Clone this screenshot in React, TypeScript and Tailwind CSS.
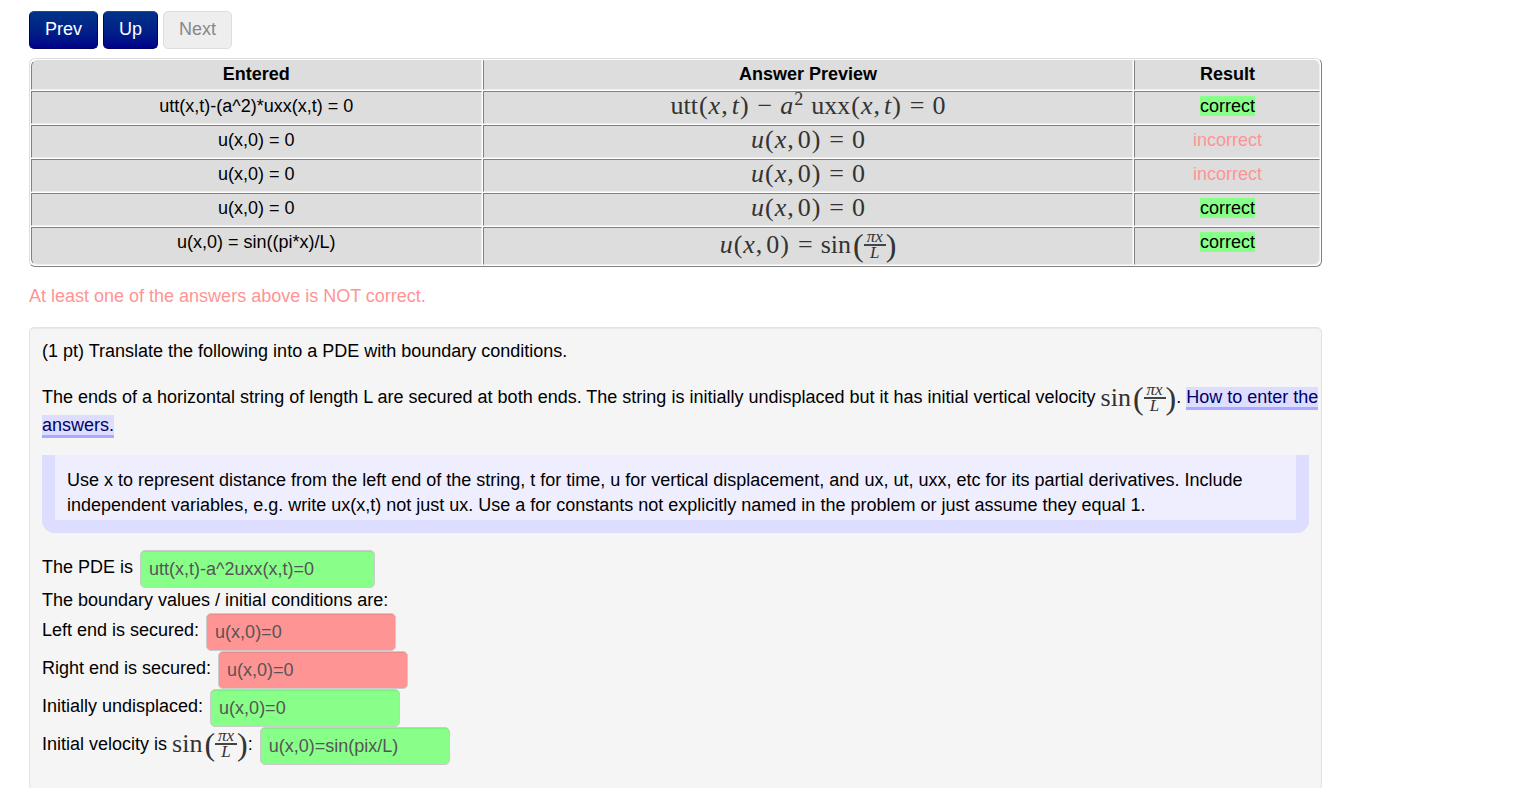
import React from "react";

type Answer = {
  entered: string;
  preview: React.ReactNode;
  correct: boolean;
};

const Var: React.FC<{ children: React.ReactNode }> = ({ children }) => <i>{children}</i>;

const SinFraction: React.FC = () => (
  <span className="inline-flex items-center align-middle font-['Liberation_Serif',serif] text-[26px] leading-6 text-[#333]">
    <span>sin</span>
    <span className="ml-0.5 text-[32px] leading-6">(</span>
    <span className="inline-flex w-[22px] flex-col items-center text-[17px] leading-[14px] italic">
      <span className="w-full border-b-2 border-[#444] text-center">πx</span>
      <span>L</span>
    </span>
    <span className="text-[32px] leading-6">)</span>
  </span>
);

const Args: React.FC<{ second: React.ReactNode }> = ({ second }) => (
  <>
    <span className="mx-px">(</span>
    <Var>x</Var>
    <span className="mr-1 ml-px">,</span>
    {second}
    <span className="mx-px">)</span>
  </>
);

const Operator: React.FC<{ children: React.ReactNode }> = ({ children }) => (
  <span className="mx-2">{children}</span>
);

const Displacement: React.FC = () => (
  <>
    <Var>u</Var>
    <Args second="0" />
    <Operator>=</Operator>
  </>
);

const answers: Answer[] = [
  {
    entered: "utt(x,t)-(a^2)*uxx(x,t) = 0",
    preview: (
      <>
        utt
        <Args second={<Var>t</Var>} />
        <Operator>−</Operator>
        <Var>a</Var>
        <sup className="mr-2 ml-px text-[18px]">2</sup>
        uxx
        <Args second={<Var>t</Var>} />
        <Operator>=</Operator>0
      </>
    ),
    correct: true
  },
  { entered: "u(x,0) = 0", preview: <><Displacement />0</>, correct: false },
  { entered: "u(x,0) = 0", preview: <><Displacement />0</>, correct: false },
  { entered: "u(x,0) = 0", preview: <><Displacement />0</>, correct: true },
  {
    entered: "u(x,0) = sin((pi*x)/L)",
    preview: (
      <span className="inline-flex items-center">
        <span><Displacement /></span>
        <SinFraction />
      </span>
    ),
    correct: true
  }
];

const cell = "border border-t-[#808080] border-l-[#808080] border-r-[#eee] border-b-[#eee] bg-[#ddd] p-0";
const headCell = "border border-t-[#ddd] border-l-[#808080] border-r-[#eee] border-b-[#eee] bg-[#ddd] px-0 pt-px pb-0.5 font-bold";

const ResultsTable: React.FC = () => (
  <table className="mt-[9px] w-full border-separate border-spacing-px rounded-md border border-t-[#ddd] border-l-[#ddd] border-r-[#808080] border-b-[#808080] text-center">
    <thead>
      <tr>
        <th className={`${headCell} w-[35%] rounded-tl-md`}>Entered</th>
        <th className={headCell}>Answer Preview</th>
        <th className={`${headCell} w-[186px] rounded-tr-md`}>Result</th>
      </tr>
    </thead>
    <tbody>
      {answers.map((answer, index) => {
        const last = index === answers.length - 1;
        return (
          <tr key={index} className={last ? "h-[38px]" : "h-[33px]"}>
            <td className={`${cell} pt-0.5 align-top ${last ? "rounded-bl-md" : ""}`}>{answer.entered}</td>
            <td className={`${cell} pt-0.5 align-top font-['Liberation_Serif',serif] text-[26px] leading-6 text-[#333]`}>
              {answer.preview}
            </td>
            <td className={`${cell} pt-0.5 align-top ${last ? "rounded-br-md" : ""}`}>
              {answer.correct ? (
                <span className="bg-[#8f8]">correct</span>
              ) : (
                <span className="text-[#ff9494]">incorrect</span>
              )}
            </td>
          </tr>
        );
      })}
    </tbody>
  </table>
);

type FieldProps = {
  id: string;
  label: React.ReactNode;
  value: string;
  correct: boolean;
  wide?: boolean;
};

const AnswerField: React.FC<FieldProps> = ({ id, label, value, correct, wide }) => {
  const [text, setText] = React.useState(value);

  return (
    <div className="flex items-center gap-[7px]">
      <label htmlFor={id} className="flex items-center pb-1">
        {label}
      </label>
      <input
        id={id}
        type="text"
        className={`h-[38px] rounded-[5px] border border-[#ccc] px-2 text-[#555] shadow-[inset_0_1px_1px_rgba(0,0,0,0.075)] ${
          correct ? "bg-[#8f8]" : "bg-[#ff9494]"
        } ${wide ? "w-[235px]" : "w-[190px]"}`}
        value={text}
        onChange={(event) => setText(event.target.value)}
      />
    </div>
  );
};

const navButton =
  "h-[38px] rounded-[5px] border border-[#006] border-t-[#1c4c8a] bg-linear-to-b from-[#038] to-[#008] px-[15px] pb-0.5 text-white";

const App: React.FC = () => (
  <main className="mr-[13%] ml-[29px] pt-[11px] font-['Liberation_Sans',Arial,sans-serif] text-[18px] leading-[25px] text-black">
    <nav className="flex gap-[5px]">
      <button type="button" className={navButton}>Prev</button>
      <button type="button" className={navButton}>Up</button>
      <button
        type="button"
        className="h-[38px] rounded-[5px] border border-[#ddd] bg-[#eee] px-[15px] pb-0.5 text-[#888]"
        disabled
      >
        Next
      </button>
    </nav>

    <ResultsTable />

    <p className="mt-[17px] text-[#ff9494]">At least one of the answers above is NOT correct.</p>

    <section className="mt-[18px] rounded-[5px] border border-[#e3e3e3] bg-[#f5f5f5] px-3 pt-[11px] pb-6 shadow-[inset_0_1px_1px_rgba(0,0,0,0.05)]">
      <p>(1 pt) Translate the following into a PDE with boundary conditions.</p>
      <p className="-mr-3 mt-[19px]">
        The ends of a horizontal string of length L are secured at both ends. The string is initially
        undisplaced but it has initial vertical velocity <SinFraction />.{" "}
        <a href="#help" className="border-b-[3px] border-[#aaf] bg-[#ddf] text-[#006]">
          How to enter the answers.
        </a>
      </p>

      <blockquote className="mt-[17px] rounded-b-[13px] border-x-[13px] border-b-[13px] border-[#ddf] bg-[#eef] px-3 pt-[13px] pb-0.5">
        Use x to represent distance from the left end of the string, t for time, u for vertical
        displacement, and ux, ut, uxx, etc for its partial derivatives. Include independent variables,
        e.g. write ux(x,t) not just ux. Use a for constants not explicitly named in the problem or just
        assume they equal 1.
      </blockquote>

      <form className="mt-[17px]" onSubmit={(event) => event.preventDefault()}>
        <AnswerField id="pde" label="The PDE is" value="utt(x,t)-a^2uxx(x,t)=0" correct wide />
        <p>The boundary values / initial conditions are:</p>
        <AnswerField id="left" label="Left end is secured:" value="u(x,0)=0" correct={false} />
        <AnswerField id="right" label="Right end is secured:" value="u(x,0)=0" correct={false} />
        <AnswerField id="displacement" label="Initially undisplaced:" value="u(x,0)=0" correct />
        <AnswerField
          id="velocity"
          label={<>Initial velocity is&nbsp;<SinFraction />:</>}
          value="u(x,0)=sin(pix/L)"
          correct
        />
      </form>
    </section>
  </main>
);

export default App;
